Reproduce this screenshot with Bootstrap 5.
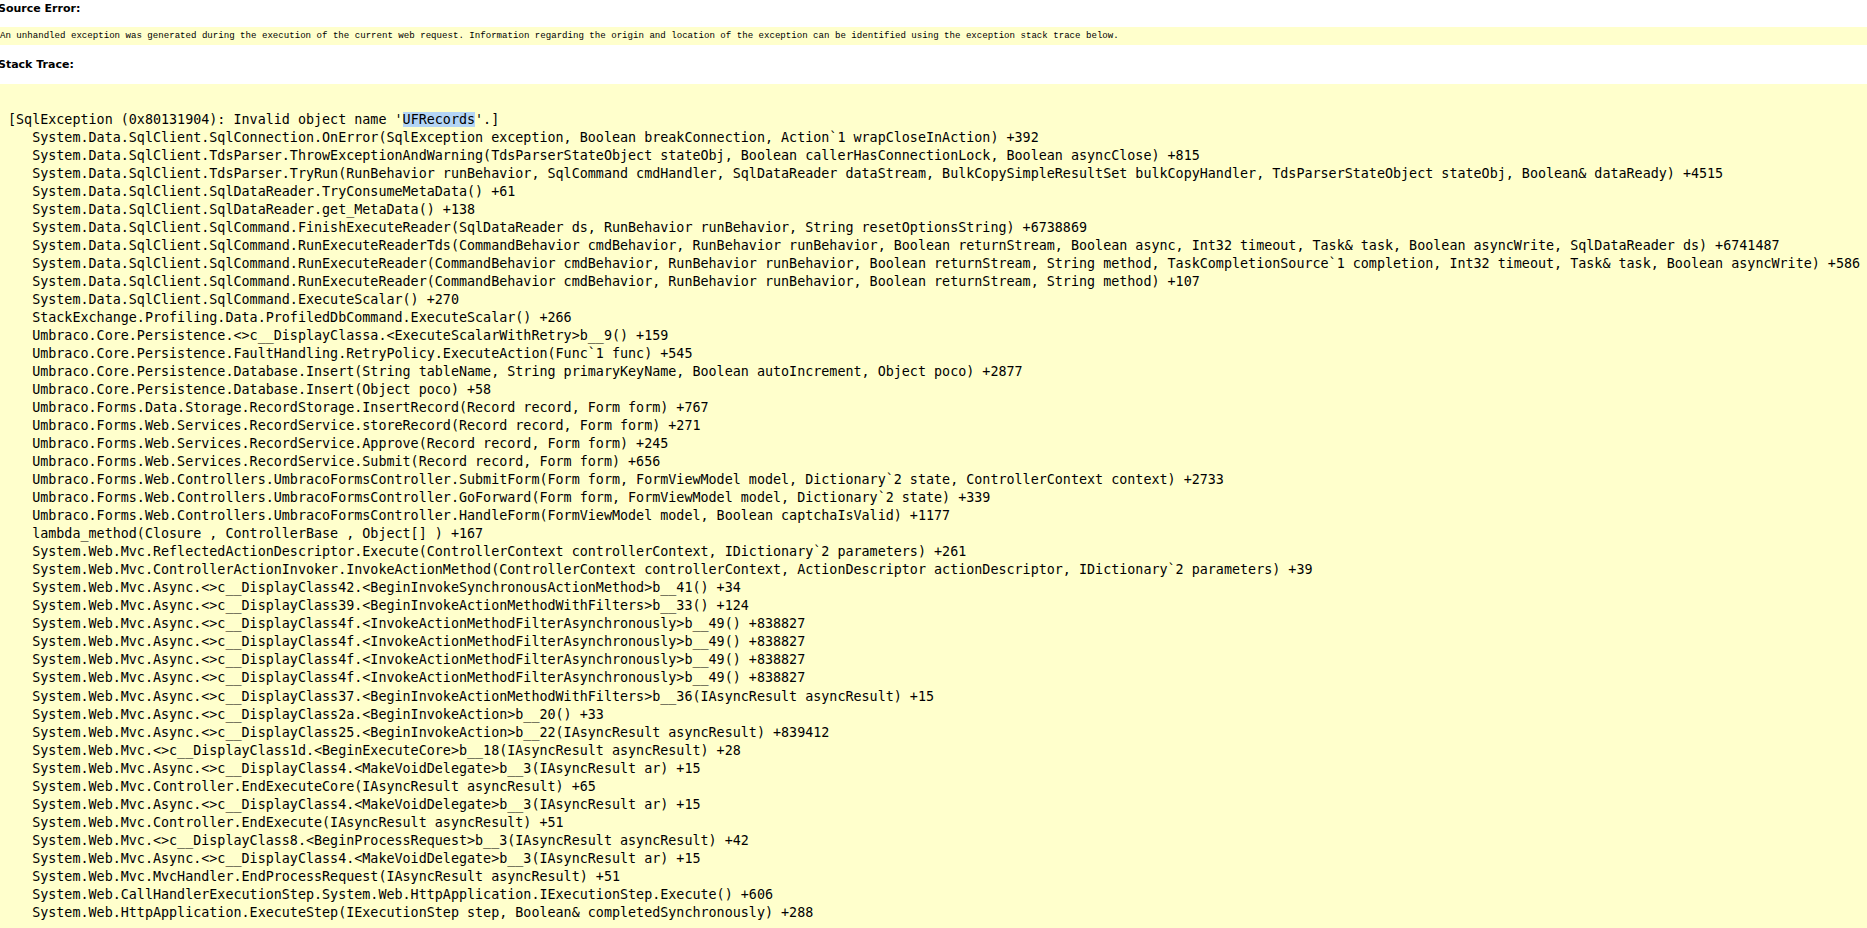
<!DOCTYPE html>
<html lang="en">
<head>
<meta charset="utf-8">
<title>Runtime Error</title>
<link rel="stylesheet" href="https://cdn.jsdelivr.net/npm/bootstrap@5.3.0/dist/css/bootstrap.min.css">
<style>
html, body { overflow: hidden; height: 928px; background: #fff; }
.err-page { margin: 0; padding: 0; }
.err-head { font-family: "DejaVu Sans", Verdana, sans-serif; font-weight: 700; font-size: 11px; line-height: 16px; color: #000; margin: 0 0 0 -2px; padding-top: 1px; }
.err-note { background: #ffffcc; font-family: "Liberation Mono", "Courier New", monospace; font-size: 9.1px; line-height: 18px; height: 18px; color: #000; margin: 10px 0 11px; white-space: pre; }
.err-trace { background: #ffffcc; margin: 11px 0 0; padding: 27px 0 0 8px; font-family: "DejaVu Sans Mono", Menlo, monospace; font-size: 13.39px; line-height: 18.02px; color: #000; white-space: pre; overflow: hidden; height: 844px; }
.err-sel { background: #b4d5f5; }
</style>
</head>
<body class="err-page">
<div class="err-head">Source Error:</div>
<div class="err-note">An unhandled exception was generated during the execution of the current web request. Information regarding the origin and location of the exception can be identified using the exception stack trace below.</div>
<div class="err-head">Stack Trace:</div>
<div class="err-trace">[SqlException (0x80131904): Invalid object name '<span class="err-sel">UFRecords</span>'.]
   System.Data.SqlClient.SqlConnection.OnError(SqlException exception, Boolean breakConnection, Action`1 wrapCloseInAction) +392
   System.Data.SqlClient.TdsParser.ThrowExceptionAndWarning(TdsParserStateObject stateObj, Boolean callerHasConnectionLock, Boolean asyncClose) +815
   System.Data.SqlClient.TdsParser.TryRun(RunBehavior runBehavior, SqlCommand cmdHandler, SqlDataReader dataStream, BulkCopySimpleResultSet bulkCopyHandler, TdsParserStateObject stateObj, Boolean&amp; dataReady) +4515
   System.Data.SqlClient.SqlDataReader.TryConsumeMetaData() +61
   System.Data.SqlClient.SqlDataReader.get_MetaData() +138
   System.Data.SqlClient.SqlCommand.FinishExecuteReader(SqlDataReader ds, RunBehavior runBehavior, String resetOptionsString) +6738869
   System.Data.SqlClient.SqlCommand.RunExecuteReaderTds(CommandBehavior cmdBehavior, RunBehavior runBehavior, Boolean returnStream, Boolean async, Int32 timeout, Task&amp; task, Boolean asyncWrite, SqlDataReader ds) +6741487
   System.Data.SqlClient.SqlCommand.RunExecuteReader(CommandBehavior cmdBehavior, RunBehavior runBehavior, Boolean returnStream, String method, TaskCompletionSource`1 completion, Int32 timeout, Task&amp; task, Boolean asyncWrite) +586
   System.Data.SqlClient.SqlCommand.RunExecuteReader(CommandBehavior cmdBehavior, RunBehavior runBehavior, Boolean returnStream, String method) +107
   System.Data.SqlClient.SqlCommand.ExecuteScalar() +270
   StackExchange.Profiling.Data.ProfiledDbCommand.ExecuteScalar() +266
   Umbraco.Core.Persistence.&lt;&gt;c__DisplayClassa.&lt;ExecuteScalarWithRetry&gt;b__9() +159
   Umbraco.Core.Persistence.FaultHandling.RetryPolicy.ExecuteAction(Func`1 func) +545
   Umbraco.Core.Persistence.Database.Insert(String tableName, String primaryKeyName, Boolean autoIncrement, Object poco) +2877
   Umbraco.Core.Persistence.Database.Insert(Object poco) +58
   Umbraco.Forms.Data.Storage.RecordStorage.InsertRecord(Record record, Form form) +767
   Umbraco.Forms.Web.Services.RecordService.storeRecord(Record record, Form form) +271
   Umbraco.Forms.Web.Services.RecordService.Approve(Record record, Form form) +245
   Umbraco.Forms.Web.Services.RecordService.Submit(Record record, Form form) +656
   Umbraco.Forms.Web.Controllers.UmbracoFormsController.SubmitForm(Form form, FormViewModel model, Dictionary`2 state, ControllerContext context) +2733
   Umbraco.Forms.Web.Controllers.UmbracoFormsController.GoForward(Form form, FormViewModel model, Dictionary`2 state) +339
   Umbraco.Forms.Web.Controllers.UmbracoFormsController.HandleForm(FormViewModel model, Boolean captchaIsValid) +1177
   lambda_method(Closure , ControllerBase , Object[] ) +167
   System.Web.Mvc.ReflectedActionDescriptor.Execute(ControllerContext controllerContext, IDictionary`2 parameters) +261
   System.Web.Mvc.ControllerActionInvoker.InvokeActionMethod(ControllerContext controllerContext, ActionDescriptor actionDescriptor, IDictionary`2 parameters) +39
   System.Web.Mvc.Async.&lt;&gt;c__DisplayClass42.&lt;BeginInvokeSynchronousActionMethod&gt;b__41() +34
   System.Web.Mvc.Async.&lt;&gt;c__DisplayClass39.&lt;BeginInvokeActionMethodWithFilters&gt;b__33() +124
   System.Web.Mvc.Async.&lt;&gt;c__DisplayClass4f.&lt;InvokeActionMethodFilterAsynchronously&gt;b__49() +838827
   System.Web.Mvc.Async.&lt;&gt;c__DisplayClass4f.&lt;InvokeActionMethodFilterAsynchronously&gt;b__49() +838827
   System.Web.Mvc.Async.&lt;&gt;c__DisplayClass4f.&lt;InvokeActionMethodFilterAsynchronously&gt;b__49() +838827
   System.Web.Mvc.Async.&lt;&gt;c__DisplayClass4f.&lt;InvokeActionMethodFilterAsynchronously&gt;b__49() +838827
   System.Web.Mvc.Async.&lt;&gt;c__DisplayClass37.&lt;BeginInvokeActionMethodWithFilters&gt;b__36(IAsyncResult asyncResult) +15
   System.Web.Mvc.Async.&lt;&gt;c__DisplayClass2a.&lt;BeginInvokeAction&gt;b__20() +33
   System.Web.Mvc.Async.&lt;&gt;c__DisplayClass25.&lt;BeginInvokeAction&gt;b__22(IAsyncResult asyncResult) +839412
   System.Web.Mvc.&lt;&gt;c__DisplayClass1d.&lt;BeginExecuteCore&gt;b__18(IAsyncResult asyncResult) +28
   System.Web.Mvc.Async.&lt;&gt;c__DisplayClass4.&lt;MakeVoidDelegate&gt;b__3(IAsyncResult ar) +15
   System.Web.Mvc.Controller.EndExecuteCore(IAsyncResult asyncResult) +65
   System.Web.Mvc.Async.&lt;&gt;c__DisplayClass4.&lt;MakeVoidDelegate&gt;b__3(IAsyncResult ar) +15
   System.Web.Mvc.Controller.EndExecute(IAsyncResult asyncResult) +51
   System.Web.Mvc.&lt;&gt;c__DisplayClass8.&lt;BeginProcessRequest&gt;b__3(IAsyncResult asyncResult) +42
   System.Web.Mvc.Async.&lt;&gt;c__DisplayClass4.&lt;MakeVoidDelegate&gt;b__3(IAsyncResult ar) +15
   System.Web.Mvc.MvcHandler.EndProcessRequest(IAsyncResult asyncResult) +51
   System.Web.CallHandlerExecutionStep.System.Web.HttpApplication.IExecutionStep.Execute() +606
   System.Web.HttpApplication.ExecuteStep(IExecutionStep step, Boolean&amp; completedSynchronously) +288</div>
<script src="https://cdn.jsdelivr.net/npm/bootstrap@5.3.0/dist/js/bootstrap.bundle.min.js"></script>
</body>
</html>
